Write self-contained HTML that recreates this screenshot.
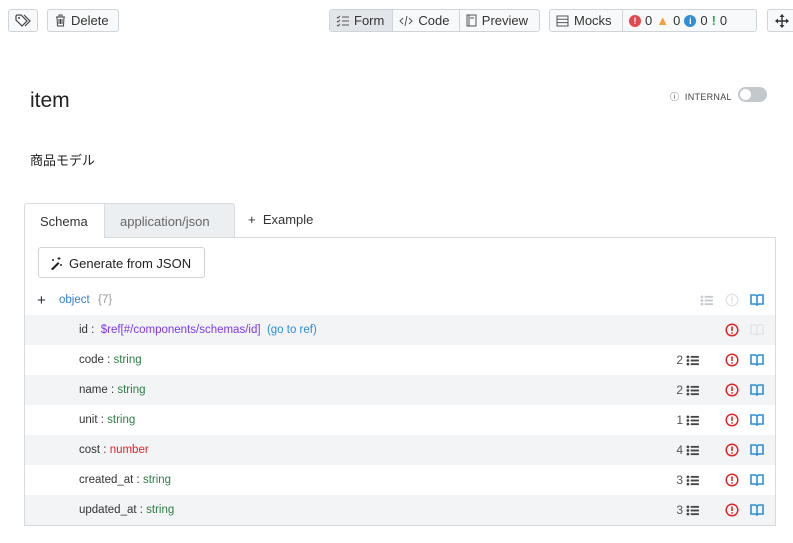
<!DOCTYPE html>
<html><head><meta charset="utf-8"><style>
*{box-sizing:border-box;margin:0;padding:0}
body{width:793px;height:543px;background:#fff;font-family:"Liberation Sans","Noto Sans CJK JP",sans-serif;color:#1f2937;position:relative;overflow:hidden;font-size:13px}
.abs{position:absolute}
.btn{position:absolute;top:9px;height:23px;border:1px solid #cfd4d9;border-radius:3px;background:#f8f9fa;display:flex;align-items:center;font-size:13px;color:#333;white-space:nowrap}
.seg{height:100%;display:flex;align-items:center;padding:0 6px;gap:5px;border-right:1px solid #cfd4d9;white-space:nowrap}
.seg:last-child{border-right:none}
.row{position:absolute;left:25px;width:750px;height:30px;font-size:11.5px;display:flex;align-items:center}
.g{background:#f3f4f6}
.nm{position:absolute;left:54px;color:#333}
.ty{color:#2f7d46}
.rt{position:absolute;right:0;top:0;height:30px;width:120px}
.num{position:absolute;right:76px;top:8px;font-size:12px;color:#555;display:flex;align-items:center;gap:3px}
.ic{position:absolute;top:8px}
</style></head><body>
<svg width="0" height="0" style="position:absolute">
<defs>
<symbol id="lst" viewBox="0 0 14 12"><circle cx="2" cy="2" r="1.5"/><circle cx="2" cy="6" r="1.5"/><circle cx="2" cy="10" r="1.5"/><rect x="5" y="1" width="9" height="2"/><rect x="5" y="5" width="9" height="2"/><rect x="5" y="9" width="9" height="2"/></symbol>
<symbol id="exc" viewBox="0 0 14 14"><circle cx="7" cy="7" r="5.8" fill="none" stroke="currentColor" stroke-width="1.5"/><rect x="6.2" y="3.5" width="1.6" height="4.5" fill="currentColor"/><circle cx="7" cy="10" r="0.9" fill="currentColor"/></symbol>
<symbol id="book" viewBox="0 0 14 14"><path d="M1 2h4.5L7 3l1.5-1H13v9H8.5L7 12 5.5 11H1z M7 3v9" fill="none" stroke="currentColor" stroke-width="1.6"/></symbol>
</defs></svg>
<div class="btn" style="left:8px;width:30px;justify-content:center"><svg width="16" height="14" viewBox="0 0 16 14"><path d="M1 2v4l6 6 5-5-6-6H2z M9 1l6 6-5 5" fill="none" stroke="#444" stroke-width="1.2"/><circle cx="4" cy="4" r="1" fill="#444"/></svg></div>
<div class="btn" style="left:47px;width:72px;padding-left:7px;gap:5px"><svg width="11" height="13" viewBox="0 0 11 13"><path d="M1 3h9M4 3V1h3v2M2 3l.5 9h6L9 3M4 5v5M5.5 5v5M7 5v5" fill="none" stroke="#444" stroke-width="1"/></svg>Delete</div>
<div class="btn" style="left:329px;width:211px">
<div class="seg" style="background:#e2e5e9;width:64px"><svg width="13" height="12" viewBox="0 0 13 12" fill="none" stroke="#555" stroke-width="1"><path d="M1 2l1 1 2-2M1 6l1 1 2-2M1 10l1 1 2-2M6 2h7M6 6h7M6 10h7"/></svg>Form</div>
<div class="seg" style="width:67px"><svg width="14" height="12" viewBox="0 0 14 12" fill="none" stroke="#555" stroke-width="1"><path d="M4 3L1 6l3 3M10 3l3 3-3 3M8 1L6 11"/></svg>Code</div>
<div class="seg" style="width:80px"><svg width="11" height="13" viewBox="0 0 11 13" fill="none" stroke="#555" stroke-width="1"><rect x="1" y="1" width="9" height="11"/><path d="M3 1v11M4 4h4"/></svg>Preview</div></div>
<div class="btn" style="left:549px;width:208px">
<div class="seg" style="width:73px"><svg width="13" height="12" viewBox="0 0 13 12" fill="none" stroke="#555" stroke-width="1"><rect x="1" y="1" width="11" height="10"/><path d="M1 4.3h11M1 7.6h11"/></svg>Mocks</div>
<div class="seg" style="gap:4px;font-size:13px"><span style="display:inline-block;width:12px;height:12px;border-radius:6px;background:#e5484d;color:#fff;font-size:9px;text-align:center;line-height:12px;font-weight:bold">!</span>0 <span style="color:#f0a040">▲</span>0 <span style="display:inline-block;width:12px;height:12px;border-radius:6px;background:#2f8ed6;color:#fff;font-size:9px;text-align:center;line-height:12px;font-weight:bold">i</span>0 <span style="color:#2fa84f;font-weight:bold">!</span>0</div></div>
<div class="btn" style="left:767px;width:30px;justify-content:center"><svg width="14" height="14" viewBox="0 0 14 14" fill="#333"><path d="M7 0l2.5 3h-1.8v3.3H11V4.5L14 7l-3 2.5V7.7H7.7V11h1.8L7 14l-2.5-3h1.8V7.7H3v1.8L0 7l3-2.5v1.8h3.3V3H4.5z"/></svg></div>

<div class="abs" style="left:30px;top:89px;font-size:21px;color:#222">item</div>
<div class="abs" style="left:670px;top:90px;font-size:9px;color:#444;letter-spacing:.3px">ⓘ&nbsp; INTERNAL</div>
<div class="abs" style="left:738px;top:87px;width:29px;height:15px;border-radius:8px;background:#c3c8cd"><div style="position:absolute;left:2px;top:2px;width:11px;height:11px;border-radius:6px;background:#fff"></div></div>
<div class="abs" style="left:30px;top:150px;font-size:13px;color:#222">商品モデル</div>

<div class="abs" style="left:24px;top:237px;width:752px;height:289px;border:1px solid #d6dbe0"></div>
<div class="abs" style="left:24px;top:203px;width:81px;height:35px;background:#fff;border:1px solid #d6dbe0;border-bottom:none;border-radius:3px 0 0 0;font-size:13px;padding:10px 0 0 15px;color:#333">Schema</div>
<div class="abs" style="left:104px;top:203px;width:131px;height:35px;background:#eceff2;border:1px solid #d6dbe0;border-radius:0 3px 0 0;font-size:13px;padding:10px 0 0 15px;color:#666">application/json</div>
<div class="abs" style="left:248px;top:212px;font-size:13px;color:#333">+&nbsp; Example</div>
<div class="abs" style="left:38px;top:247px;width:167px;height:31px;border:1px solid #cfd4d9;border-radius:3px;font-size:13px;padding:8px 0 0 10px;color:#222;display:flex;gap:6px"><svg width="14" height="14" viewBox="0 0 14 14"><path d="M2 13l7-7 1.5 1.5-7 7z" fill="#222"/><path d="M10 1v3M8.5 2.5h3M4 3v2M3 4h2M12 8v2M11 9h2" stroke="#222" stroke-width="1"/></svg>Generate from JSON</div>

<div class="row" style="top:285px"><span style="position:absolute;left:12px;font-size:15px">+</span><span style="position:absolute;left:34px;color:#2f7fd0">object</span><span style="position:absolute;left:73px;color:#999">{7}</span>
<div class="rt"><svg class="ic" style="right:62px;top:10px;fill:#c5cad0" width="13" height="11"><use href="#lst"/></svg><svg class="ic" style="right:36px;color:#e3e6ea" width="14" height="14"><use href="#exc"/></svg><svg class="ic" style="right:11px;color:#2f8ed6" width="14" height="14"><use href="#book"/></svg></div></div>
<div class="row g" style="top:315px"><span class="nm">id : <span style="color:#7c3aed">&nbsp;$ref[#/components/schemas/id]</span>&nbsp; <span style="color:#2f8ed6">(go to ref)</span></span>
<div class="rt"><svg class="ic" style="right:36px;color:#dc2626" width="14" height="14"><use href="#exc"/></svg><svg class="ic" style="right:11px;color:#e3e6ea" width="14" height="14"><use href="#book"/></svg></div></div>
<div class="row" style="top:345px"><span class="nm">code : <span class="ty">string</span></span><div class="rt"><span class="num">2 <svg width="13" height="11" style="fill:#444"><use href="#lst"/></svg></span><svg class="ic" style="right:36px;color:#dc2626" width="14" height="14"><use href="#exc"/></svg><svg class="ic" style="right:11px;color:#2f8ed6" width="14" height="14"><use href="#book"/></svg></div></div>
<div class="row g" style="top:375px"><span class="nm">name : <span class="ty">string</span></span><div class="rt"><span class="num">2 <svg width="13" height="11" style="fill:#444"><use href="#lst"/></svg></span><svg class="ic" style="right:36px;color:#dc2626" width="14" height="14"><use href="#exc"/></svg><svg class="ic" style="right:11px;color:#2f8ed6" width="14" height="14"><use href="#book"/></svg></div></div>
<div class="row" style="top:405px"><span class="nm">unit : <span class="ty">string</span></span><div class="rt"><span class="num">1 <svg width="13" height="11" style="fill:#444"><use href="#lst"/></svg></span><svg class="ic" style="right:36px;color:#dc2626" width="14" height="14"><use href="#exc"/></svg><svg class="ic" style="right:11px;color:#2f8ed6" width="14" height="14"><use href="#book"/></svg></div></div>
<div class="row g" style="top:435px"><span class="nm">cost : <span style="color:#dc2626">number</span></span><div class="rt"><span class="num">4 <svg width="13" height="11" style="fill:#444"><use href="#lst"/></svg></span><svg class="ic" style="right:36px;color:#dc2626" width="14" height="14"><use href="#exc"/></svg><svg class="ic" style="right:11px;color:#2f8ed6" width="14" height="14"><use href="#book"/></svg></div></div>
<div class="row" style="top:465px"><span class="nm">created_at : <span class="ty">string</span></span><div class="rt"><span class="num">3 <svg width="13" height="11" style="fill:#444"><use href="#lst"/></svg></span><svg class="ic" style="right:36px;color:#dc2626" width="14" height="14"><use href="#exc"/></svg><svg class="ic" style="right:11px;color:#2f8ed6" width="14" height="14"><use href="#book"/></svg></div></div>
<div class="row g" style="top:495px"><span class="nm">updated_at : <span class="ty">string</span></span><div class="rt"><span class="num">3 <svg width="13" height="11" style="fill:#444"><use href="#lst"/></svg></span><svg class="ic" style="right:36px;color:#dc2626" width="14" height="14"><use href="#exc"/></svg><svg class="ic" style="right:11px;color:#2f8ed6" width="14" height="14"><use href="#book"/></svg></div></div>
</body></html>
